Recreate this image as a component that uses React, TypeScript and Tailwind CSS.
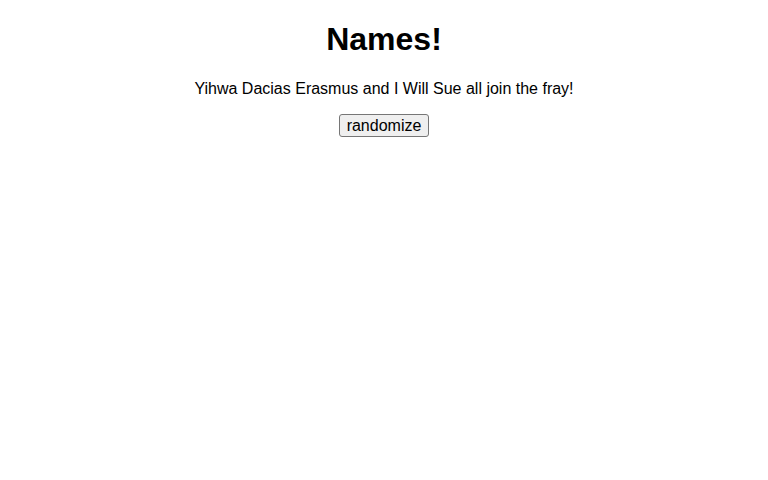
import React, { useState } from 'react';

const FIRST = ['Yihwa', 'Dacias', 'Erasmus', 'Will', 'Sue', 'Ola', 'Marta'];

function pick(): string {
  const a = FIRST[Math.floor(Math.random() * FIRST.length)];
  const b = FIRST[Math.floor(Math.random() * FIRST.length)];
  return `${a} ${b}`;
}

export default function App() {
  const [names, setNames] = useState<[string, string]>(['Yihwa Dacias Erasmus', 'I Will Sue']);

  return (
    <div className="min-h-[480px] bg-white text-center text-black font-['Liberation_Sans',Arial,sans-serif] flow-root">
      <h1 className="mt-[21.44px] mb-[21.44px] text-[32px] leading-[37px] font-bold">Names!</h1>
      <p className="my-4 text-base leading-[18px]">
        {names[0]} and {names[1]} all join the fray!
      </p>
      <button
        type="button"
        onClick={() => setNames([pick(), pick()])}
        className="bg-[#efefef] border border-[#767676] rounded-[3px] px-[7px] py-[1.5px] text-base leading-[18px] text-black"
      >
        randomize
      </button>
    </div>
  );
}
